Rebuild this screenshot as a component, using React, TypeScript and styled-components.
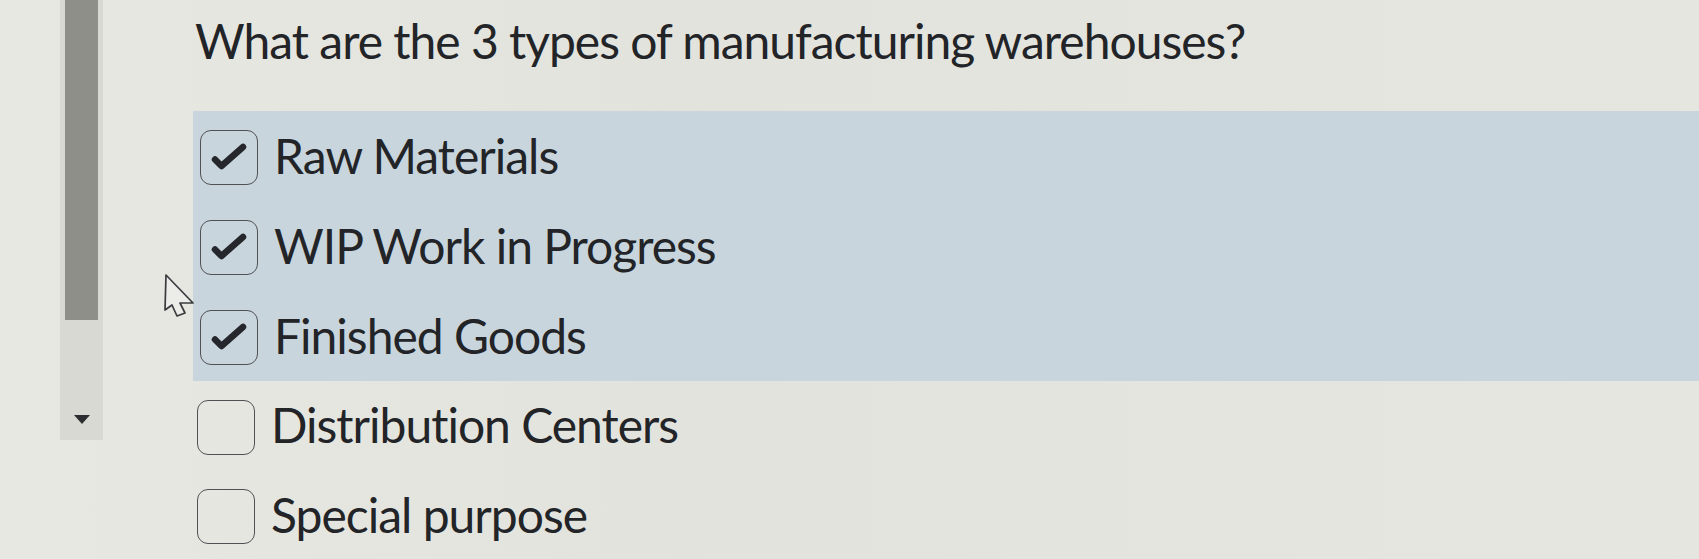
import React from "react";
import styled, { createGlobalStyle } from "styled-components";

const GlobalStyle = createGlobalStyle`
  html, body {
    margin: 0;
    padding: 0;
    background: #e4e4df;
  }
  body {
    font-family: Lato, "Open Sans", sans-serif;
    color: #222428;
  }
`;

type Option = { label: string; checked: boolean };

const options: Option[] = [
  { label: "Raw Materials", checked: true },
  { label: "WIP Work in Progress", checked: true },
  { label: "Finished Goods", checked: true },
  { label: "Distribution Centers", checked: false },
  { label: "Special purpose", checked: false },
];

const CheckBox = ({ checked }: { checked: boolean }) => (
  <Box>
    {checked && (
      <svg width="40" height="32" viewBox="-2 -2 40 32">
        <path
          d="M4 15.5 L10.5 22 L32 3"
          fill="none"
          stroke="#26272c"
          strokeWidth="6.5"
          strokeLinecap="round"
          strokeLinejoin="round"
        />
      </svg>
    )}
  </Box>
);

const Pointer = () => (
  <CursorHold>
    <svg width="34" height="46" viewBox="0 0 34 46">
      <path
        d="M3 2 L2 37 L9 32 L14 43 L22 40 L17 30 L30 30 Z"
        fill="#ecece8"
        stroke="#3a3b3e"
        strokeWidth="1.7"
        strokeLinejoin="round"
      />
    </svg>
  </CursorHold>
);

const App = () => {
  const selected = options.filter((o) => o.checked);
  const rest = options.filter((o) => !o.checked);

  return (
    <Page>
      <GlobalStyle />
      <ScrollRail>
        <Thumb />
        <DownArrow />
      </ScrollRail>
      <Main>
        <Title>What are the 3 types of manufacturing warehouses?</Title>
        <Selected>
          {selected.map((o) => (
            <Row key={o.label} $inset={7}>
              <CheckBox checked />
              <Label>{o.label}</Label>
            </Row>
          ))}
        </Selected>
        {rest.map((o) => (
          <Row key={o.label} $inset={4}>
            <CheckBox checked={false} />
            <Label>{o.label}</Label>
          </Row>
        ))}
      </Main>
      <Pointer />
    </Page>
  );
};

export default App;

const Page = styled.div`
  position: relative;
  display: flex;
  width: 100%;
  height: 559px;
  overflow: hidden;
  background: linear-gradient(90deg, #e8e8e3 0%, #e3e3de 40%, #e6e6e1 100%);
`;

const ScrollRail = styled.div`
  display: flex;
  flex-direction: column;
  margin-left: 60px;
  width: 43px;
  height: 440px;
  padding: 0 5px;
  box-sizing: border-box;
  background: #d9d9d3;
`;

const Thumb = styled.div`
  height: 320px;
  background: #8f8f89;
`;

const DownArrow = styled.div`
  width: 0;
  height: 0;
  margin: 95px 0 0 9px;
  border-left: 8px solid transparent;
  border-right: 8px solid transparent;
  border-top: 9px solid #2c2d30;
`;

const Main = styled.div`
  flex: 1;
  display: flex;
  flex-direction: column;
  padding-left: 90px;
`;

const Title = styled.h1`
  margin: 12px 0 0 2px;
  font-size: 48px;
  font-weight: 400;
  line-height: 1.2;
  letter-spacing: -1px;
`;

const Selected = styled.div`
  margin-top: 41px;
  background: #c9d5dc;
`;

const Row = styled.div<{ $inset: number }>`
  display: flex;
  align-items: center;
  height: 90px;
  padding-left: ${(p) => p.$inset}px;
  gap: 16px;
`;

const Box = styled.div`
  display: flex;
  align-items: center;
  justify-content: center;
  flex-shrink: 0;
  width: 58px;
  height: 55px;
  box-sizing: border-box;
  border: 1.8px solid #505155;
  border-radius: 11px;
  margin-top: 4px;
`;

const Label = styled.span`
  font-size: 48px;
  line-height: 1.2;
  letter-spacing: -1px;
`;

const CursorHold = styled.div`
  position: absolute;
  left: 163px;
  top: 273px;
  pointer-events: none;
`;
